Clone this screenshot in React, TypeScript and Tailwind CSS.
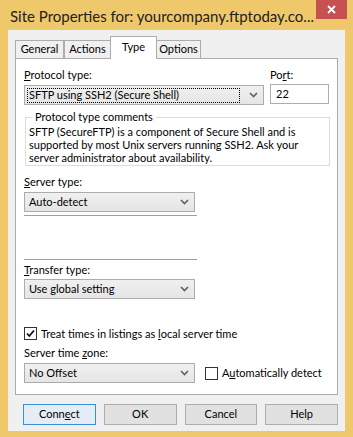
import { ReactNode } from "react";

const font = { fontFamily: 'Lato, "Noto Sans", "Liberation Sans", sans-serif' };

const Chevron = () => (
  <svg width="9" height="6" viewBox="0 0 9 6" className="shrink-0">
    <polyline points="1,1 4.5,4.5 8,1" fill="none" stroke="#606060" strokeWidth="1.6" />
  </svg>
);

const Select = ({ value, width, focus }: { value: string; width: string; focus?: boolean }) => (
  <div
    className={`${width} h-[20px] flex items-center justify-between border border-[#acacac] bg-gradient-to-b from-[#f0f0f0] to-[#e5e5e5] pl-[2px] pr-[5px]`}
  >
    {focus ? (
      <span className="flex-1 mr-[9px] h-[15px] flex items-center border border-dotted border-black pl-[1px]">{value}</span>
    ) : (
      <span className="pl-[2px]">{value}</span>
    )}
    <Chevron />
  </div>
);

const Checkbox = ({ checked }: { checked?: boolean }) => (
  <span className="w-[13px] h-[13px] border border-[#333] bg-white flex items-center justify-center shrink-0">
    {checked && (
      <svg width="11" height="11" viewBox="0 0 11 11">
        <polyline points="2,5.5 4.3,8 9,2.5" fill="none" stroke="#111" strokeWidth="1.8" />
      </svg>
    )}
  </span>
);

const Button = ({ children, primary }: { children: ReactNode; primary?: boolean }) => (
  <div
    className={`w-[73px] h-[21px] flex items-center justify-center border ${
      primary ? "border-[#3c8fd7] bg-[#e5eef7]" : "border-[#adadad] bg-[#e1e1e1]"
    }`}
  >
    {children}
  </div>
);

const Tab = ({ label, width, active }: { label: string; width: string; active?: boolean }) =>
  active ? (
    <div className={`${width} relative z-10 h-[23px] -mb-px bg-white border border-b-0 border-[#acacac] flex items-center justify-center -mx-[1px] pb-[2px]`}>
      {label}
    </div>
  ) : (
    <div className={`${width} h-[18px] bg-[#f0f0f0] border border-b-0 border-[#acacac] flex items-center justify-center`}>{label}</div>
  );

export default function App() {
  return (
    <div style={font} className="w-[353px] h-[437px] bg-[#efc86c] flex flex-col text-[11px] text-black overflow-hidden whitespace-nowrap">
      {/* title bar */}
      <div className="h-[30px] flex items-start shrink-0">
        <div className="flex-1 pl-[10px] pt-[5px] text-[15px] text-[#222]">
          Site Properties for: yourcompany.ftptoday.co...
        </div>
        <div className="w-[31px] h-[19px] bg-[#c75050] mr-[6px] flex items-center justify-center">
          <svg width="9" height="9" viewBox="0 0 9 9">
            <path d="M1 1 L8 8 M8 1 L1 8" stroke="#fff" strokeWidth="1.8" />
          </svg>
        </div>
      </div>

      {/* client */}
      <div className="mx-[8px] mb-[6px] flex-1 bg-[#f0f0f0] px-[7px] pt-[6px] flex flex-col">
        <div className="flex items-end">
          <Tab label="General" width="w-[49px]" />
          <Tab label="Actions" width="w-[47px]" />
          <Tab label="Type" width="w-[47px]" active />
          <Tab label="Options" width="w-[45px]" />
        </div>

        <div className="h-[337px] w-[323px] bg-white border border-[#acacac] pl-[8px] pr-[9px] pt-[8px]">
          <div className="flex">
            <div className="flex flex-col">
              <span className="leading-[15px]">
                <u>P</u>rotocol type:
              </span>
              <div className="mt-[3px]">
                <Select value="SFTP using SSH2 (Secure Shell)" width="w-[240px]" focus />
              </div>
            </div>
            <div className="flex flex-col ml-[6px]">
              <span className="leading-[15px]">
                Po<u>r</u>t:
              </span>
              <div className="mt-[2px] w-[59px] h-[20px] border border-[#abadb3] bg-white flex items-center pl-[5px]">22</div>
            </div>
          </div>

          <fieldset className="mt-[5px] ml-[1px] w-[305px] h-[56px] border border-[#dcdcdc] px-[3px] leading-[13px]">
            <legend className="px-[3px] ml-[3px] leading-[14px]">Protocol type comments</legend>
            <div className="mt-[1px]">
              SFTP (SecureFTP) is a component of Secure Shell and is
              <br />
              supported by most Unix servers running SSH2. Ask your
              <br />
              server administrator about availability.
            </div>
          </fieldset>

          <div className="mt-[8px] leading-[15px]">
            <u>S</u>erver type:
          </div>
          <div className="mt-[3px]">
            <Select value="Auto-detect" width="w-[171px]" />
          </div>
          <div className="mt-[3px] w-[173px] border-t border-[#a0a0a0]" />
          <div className="mt-[43px] w-[173px] border-t border-[#a0a0a0]" />

          <div className="mt-[2px] leading-[15px]">
            <u>T</u>ransfer type:
          </div>
          <div className="mt-[2px]">
            <Select value="Use global setting" width="w-[171px]" />
          </div>

          <div className="mt-[27px] flex items-center gap-[4px] leading-[15px]">
            <Checkbox checked />
            <span>
              Treat times in listings as <u>l</u>ocal server time
            </span>
          </div>
          <div className="mt-[4px] leading-[15px]">
            Server time <u>z</u>one:
          </div>
          <div className="mt-[3px] flex items-center">
            <Select value="No Offset" width="w-[171px]" />
            <div className="ml-[10px] flex items-center gap-[4px]">
              <Checkbox />
              <span>
                A<u>u</u>tomatically detect
              </span>
            </div>
          </div>
        </div>

        <div className="mt-[9px] flex gap-[8px] pl-[8px]">
          <Button primary>
            <span>
              Conn<u>e</u>ct
            </span>
          </Button>
          <Button>OK</Button>
          <Button>Cancel</Button>
          <Button>Help</Button>
        </div>
      </div>
    </div>
  );
}
